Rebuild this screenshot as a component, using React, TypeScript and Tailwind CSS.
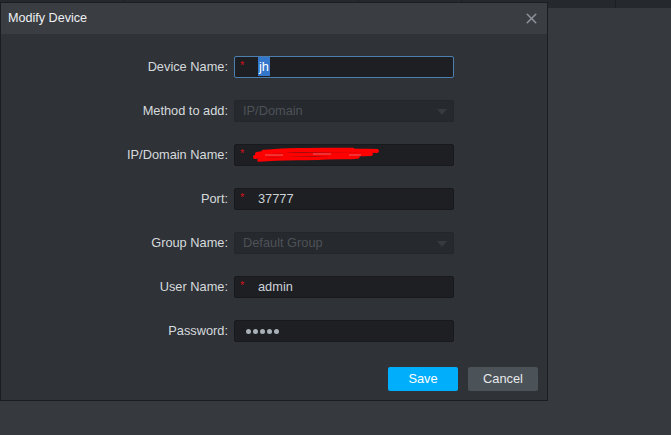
import { X } from 'lucide-react';

type Row = {
  label: string;
  kind: 'text' | 'select' | 'password' | 'redacted';
  value?: string;
  required?: boolean;
  focused?: boolean;
};

const rows: Row[] = [
  { label: 'Device Name:', kind: 'text', value: 'jh', required: true, focused: true },
  { label: 'Method to add:', kind: 'select', value: 'IP/Domain' },
  { label: 'IP/Domain Name:', kind: 'redacted', required: true },
  { label: 'Port:', kind: 'text', value: '37777', required: true },
  { label: 'Group Name:', kind: 'select', value: 'Default Group' },
  { label: 'User Name:', kind: 'text', value: 'admin', required: true },
  { label: 'Password:', kind: 'password' },
];

function Scribble() {
  return (
    <svg width="130" height="18" viewBox="0 0 130 18" className="absolute left-[18px] top-[1px]">
      <path d="M4 8 C30 3 70 4 124 5" stroke="#ff0000" strokeWidth="4" fill="none" strokeLinecap="round" />
      <path d="M2 11 C40 7 80 9 118 8" stroke="#ff0000" strokeWidth="4" fill="none" strokeLinecap="round" />
      <path d="M6 14 C30 12 50 13 70 12 C85 11 95 12 105 11" stroke="#ff0000" strokeWidth="3.5" fill="none" strokeLinecap="round" />
      <path d="M10 5 C40 2 70 3 100 3" stroke="#ff0000" strokeWidth="2.5" fill="none" strokeLinecap="round" />
      <path d="M12 9 L30 9 M60 8 L78 8 M96 9 L108 9" stroke="#c9cdd2" strokeWidth="0.8" opacity="0.6" />
    </svg>
  );
}

function Field({ row }: { row: Row }) {
  if (row.kind === 'select') {
    return (
      <div className="relative flex h-[22px] w-[220px] items-center rounded-[2px] border border-[#23262a] bg-[#26292d] pl-[8px] text-[#4d5258]">
        <span>{row.value}</span>
        <svg width="10" height="6" viewBox="0 0 10 6" className="absolute right-[6px] top-[8px]">
          <path d="M0 0 L10 0 L5 6 Z" fill="#363b40" />
        </svg>
      </div>
    );
  }
  return (
    <div
      className={`relative flex h-[22px] w-[220px] items-center rounded-[2px] border bg-[#1d1f23] ${
        row.focused ? 'border-[#4d7fae]' : 'border-[#17191c]'
      }`}
    >
      {row.required && (
        <span className="absolute left-[5px] top-[3px] text-[11px] leading-none text-[#d3121a]">*</span>
      )}
      {row.kind === 'text' && (
        <span className="pl-[23px] text-[#cdd1d5]">
          {row.focused ? (
            <span className="bg-[#3277cc] px-[1px] py-[2px] text-white">{row.value}</span>
          ) : (
            row.value
          )}
        </span>
      )}
      {row.kind === 'password' && (
        <div className="flex gap-[2px] pl-[11px]">
          {[0, 1, 2, 3, 4].map((i) => (
            <span key={i} className="h-[5px] w-[5px] rounded-full bg-[#a9b0b8]" />
          ))}
        </div>
      )}
      {row.kind === 'redacted' && <Scribble />}
    </div>
  );
}

export default function App() {
  return (
    <div
      className="relative h-[435px] w-[671px] overflow-hidden bg-[#363a3f] text-[12.8px]"
      style={{ fontFamily: '"Liberation Sans", Arial, sans-serif' }}
    >
      {/* App toolbar strip behind the dialog */}
      <div className="flex h-[8px] bg-[#25282c]">
        <div className="w-[124px] border-r border-[#1d1f22]" />
        <div className="w-[235px] border-r border-[#1d1f22]" />
        <div className="w-[103px] border-r border-[#1d1f22]" />
        <div className="w-[154px] border-r border-[#1d1f22]" />
        <div className="flex-1" />
      </div>

      {/* Dialog */}
      <div className="absolute left-0 top-[2px] flex h-[399px] w-[548px] flex-col border border-[#1b1d20] bg-[#2f3237]">
        <div className="flex h-[31px] items-center justify-between bg-[#3a3d42] pl-[7px] pr-[7px]">
          <span className="text-[12.6px] text-[#eef0f2]">Modify Device</span>
          <X size={17} strokeWidth={2.2} className="text-[#8c9298]" />
        </div>

        <div className="flex flex-col gap-[22px] pt-[22px]">
          {rows.map((row) => (
            <div key={row.label} className="flex items-center">
              <div className="w-[227px] text-right text-[#d6dadd]">{row.label}</div>
              <div className="ml-[6px]">
                <Field row={row} />
              </div>
            </div>
          ))}
        </div>

        <div className="mt-[25px] flex justify-end gap-[10px] pr-[9px]">
          <button className="h-[24px] w-[70px] rounded-[2px] bg-[#00aefc] text-white">Save</button>
          <button className="h-[24px] w-[70px] rounded-[2px] bg-[#4b5258] text-[#e8eaec]">Cancel</button>
        </div>
      </div>
    </div>
  );
}
